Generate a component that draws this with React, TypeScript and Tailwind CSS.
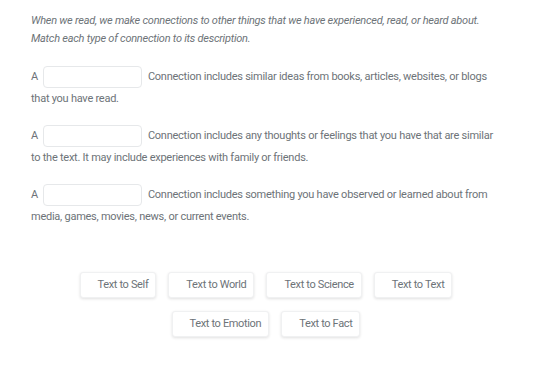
import React from 'react';

const rows = [
  {
    rest: 'Connection includes similar ideas from books, articles, websites, or blogs that you have read.',
  },
  {
    rest: 'Connection includes any thoughts or feelings that you have that are similar to the text. It may include experiences with family or friends.',
  },
  {
    rest: 'Connection includes something you have observed or learned about from media, games, movies, news, or current events.',
  },
];

const options = [
  ['Text to Self', 'Text to World', 'Text to Science', 'Text to Text'],
  ['Text to Emotion', 'Text to Fact'],
];

const App = () => {
  return (
    <div
      className="w-[552px] h-[366px] bg-white pl-[31px] pr-[51px] pt-[12px] text-[#6d7378] text-[11px] tracking-[-0.25px]"
      style={{ fontFamily: 'Roboto, sans-serif' }}
    >
      <p className="italic leading-[18px]">
        When we read, we make connections to other things that we have experienced, read, or heard about.
        <br />
        Match each type of connection to its description.
      </p>

      <div className="mt-[18px] flex flex-col gap-[15px]">
        {rows.map((row, i) => (
          <p key={i} className="leading-[22px]">
            A
            <span className="inline-block align-middle w-[99px] h-[22px] ml-[5px] mr-[6px] rounded border border-[#e6e8ea] bg-white" />
            {row.rest}
          </p>
        ))}
      </div>

      <div className="mt-[44px] flex flex-col items-center gap-[13px]">
        {options.map((line, i) => (
          <div key={i} className="flex gap-[12px]">
            {line.map(opt => (
              <button
                key={opt}
                className="h-[26px] pl-[17px] pr-[7px] rounded-[3px] bg-white border border-[#f0f1f2] shadow-[0_1px_3px_rgba(0,0,0,0.12)] text-[#6d7378] text-[11px] tracking-[-0.35px]"
              >
                {opt}
              </button>
            ))}
          </div>
        ))}
      </div>
    </div>
  );
};

export default App;
